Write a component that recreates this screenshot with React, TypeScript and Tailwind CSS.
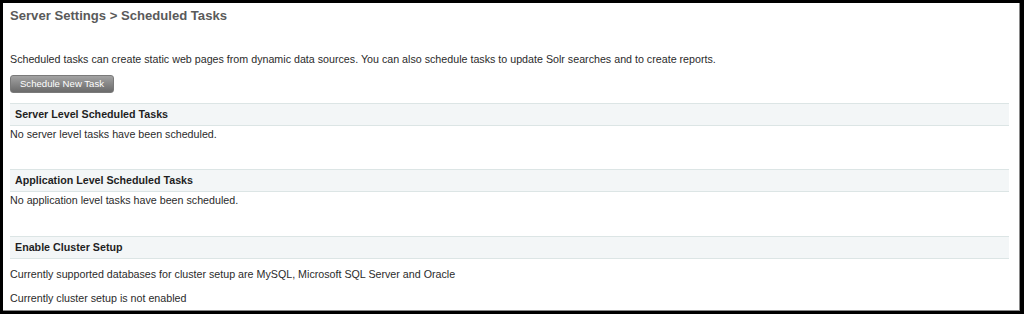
export default function App() {
  const font = { fontFamily: '"Liberation Sans", Arial, sans-serif' };
  const header =
    "h-[23px] bg-[#f3f6f7] border-t border-b border-[#dce5e5] pl-[5px] font-bold text-[#1f1f1f] leading-[21px]";
  return (
    <div
      className="w-[1024px] h-[314px] bg-black border-l-[3px] border-t-[3px] border-r-[4px] border-b-[3px] border-black"
      style={font}
    >
      <div className="w-full h-full bg-white border-r border-b border-[#8a8a8a] pl-[7px] pr-[10px] text-[10.7px] text-[#2b2b2b] overflow-hidden">
        <h1 className="text-[13.1px] font-bold text-[#5a5a5a] pt-[5px] leading-[16px]">
          Server Settings &gt; Scheduled Tasks
        </h1>
        <p className="mt-[28px] leading-[14px]">
          Scheduled tasks can create static web pages from dynamic data sources. You can also schedule tasks to update Solr searches and to create reports.
        </p>
        <button className="mt-[9px] h-[18px] w-[104px] rounded-[3px] bg-gradient-to-b from-[#a3a3a3] to-[#6b6b6b] text-white text-[9.6px] leading-[16px] border border-[#7a7a7a] block">
          Schedule New Task
        </button>
        <div className={`mt-[10px] ${header}`}>Server Level Scheduled Tasks</div>
        <p className="mt-[1px] leading-[14px]">No server level tasks have been scheduled.</p>
        <div className={`mt-[28px] ${header}`}>Application Level Scheduled Tasks</div>
        <p className="mt-[1px] leading-[14px]">No application level tasks have been scheduled.</p>
        <div className={`mt-[29px] ${header}`}>Enable Cluster Setup</div>
        <p className="mt-[8px] leading-[14px]">
          Currently supported databases for cluster setup are MySQL, Microsoft SQL Server and Oracle
        </p>
        <p className="mt-[10px] leading-[14px]">Currently cluster setup is not enabled</p>
      </div>
    </div>
  );
}
